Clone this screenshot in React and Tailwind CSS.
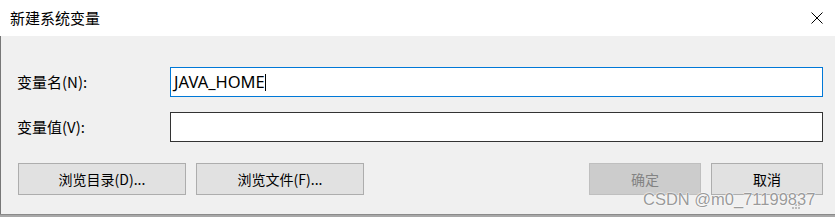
const font = { fontFamily: '"Microsoft YaHei", "Noto Sans CJK SC", "Noto Sans", sans-serif' };

function DialogButton({ children, disabled, className = '' }) {
  return (
    <button
      disabled={disabled}
      className={`h-[32px] border text-[14px] leading-none flex items-center justify-center ${
        disabled
          ? 'bg-[#cccccc] border-[#bfbfbf] text-[#838383]'
          : 'bg-[#e1e1e1] border-[#adadad] text-black'
      } ${className}`}
    >
      {children}
    </button>
  );
}

export default function App() {
  return (
    <div className="w-[835px] h-[217px] bg-[#a8a8a8] relative overflow-hidden" style={font}>
      <div className="h-[215px] flex flex-col bg-[#f0f0f0] border-b border-[#8a8a8a]">
        {/* title bar */}
        <div className="h-[36px] bg-white flex items-center justify-between pl-[10px] pr-[12px] shrink-0">
          <span className="text-[15px] text-black">新建系统变量</span>
          <svg width="12" height="12" viewBox="0 0 12 12">
            <path d="M0.5 0.5 L11.5 11.5 M11.5 0.5 L0.5 11.5" stroke="#000" strokeWidth="1" />
          </svg>
        </div>

        {/* body */}
        <div className="flex-1 border-l border-[#777777] pl-[16px] pr-[12px] pt-[31px]">
          <div className="grid grid-cols-[153px_653px] gap-y-[15px] items-center">
            <label className="text-[15px] text-black">变量名(N):</label>
            <div className="h-[30px] bg-white border border-[#0078d7] flex items-center pl-[3px]">
              <span className="text-[16.5px] text-black" style={{ fontFamily: '"Segoe UI", "Noto Sans", "Open Sans", sans-serif' }}>
                JAVA_HOME
              </span>
              <span className="w-px h-[17px] bg-black" />
            </div>
            <label className="text-[15px] text-black">变量值(V):</label>
            <div className="h-[30px] bg-white border border-[#333333]" />
          </div>

          <div className="flex items-center mt-[21px] pl-[1px] w-[806px]">
            <DialogButton className="w-[168px]">浏览目录(D)...</DialogButton>
            <DialogButton className="w-[168px] ml-[10px]">浏览文件(F)...</DialogButton>
            <div className="flex-1" />
            <DialogButton disabled className="w-[112px]">确定</DialogButton>
            <DialogButton className="w-[112px] ml-[10px]">取消</DialogButton>
          </div>
        </div>
      </div>

      {/* resize grip */}
      <svg className="absolute left-[791px] top-[200px]" width="10" height="10" viewBox="0 0 10 10">
        {[[7, 1], [4, 4], [7, 4], [1, 7], [4, 7], [7, 7]].map(([x, y], i) => (
          <rect key={i} x={x} y={y} width="2" height="2" fill="#bcbcbc" />
        ))}
      </svg>

      {/* watermark */}
      <div
        className="absolute left-[643px] top-[189px] text-[16.5px] leading-[20px] text-[#9a9a9a] whitespace-nowrap"
        style={{ fontFamily: '"Liberation Sans", Arial, sans-serif', textShadow: '0 0 1px #fff, 0 0 1px #fff, 0 0 2px #fff' }}
      >
        CSDN @m0_71199837
      </div>
    </div>
  );
}
